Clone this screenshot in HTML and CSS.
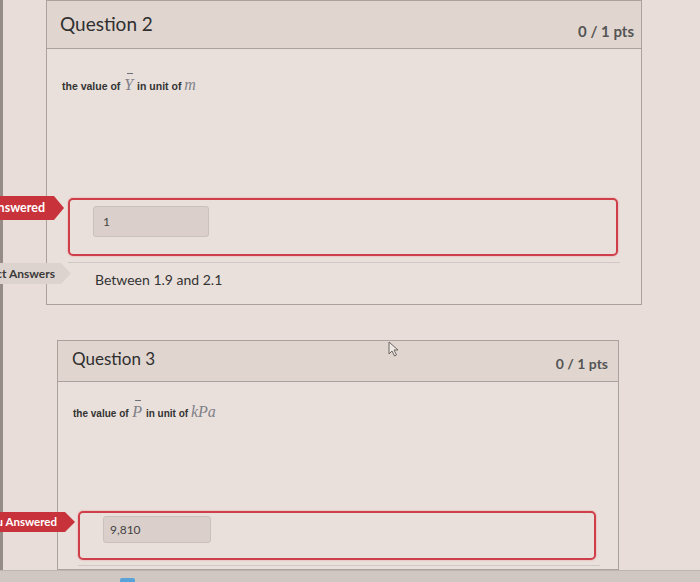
FILE: index.html
```html
<!DOCTYPE html>
<html lang="en">
<head>
<meta charset="utf-8">
<title>Quiz results</title>
<link rel="stylesheet" href="styles.css">
</head>
<body>
<div class="screen">
  <section class="card q2">
    <header class="card-head">
      <h2 class="title">Question 2</h2>
      <span class="pts">0 / 1 pts</span>
    </header>
    <div class="card-body">
      <p class="qtext">the value of <span class="math bar">Y</span> in unit of <span class="math">m</span></p>
      <div class="answer-row">
        <span class="tag tag-red">You Answered</span>
        <div class="answer-box"><div class="input">1</div></div>
      </div>
      <div class="correct-row">
        <span class="tag tag-gray">Correct Answers</span>
        <span class="correct">Between 1.9 and 2.1</span>
      </div>
    </div>
  </section>

  <section class="card q3">
    <header class="card-head">
      <h2 class="title">Question 3</h2>
      <span class="pts">0 / 1 pts</span>
    </header>
    <div class="card-body">
      <p class="qtext">the value of <span class="math bar">P</span> in unit of <span class="math">kPa</span></p>
      <div class="answer-row">
        <span class="tag tag-red">You Answered</span>
        <div class="answer-box"><div class="input">9,810</div></div>
      </div>
    </div>
  </section>

  <div class="taskbar"><span class="dock-icon"></span></div>

  <svg class="cursor" width="11" height="16" viewBox="0 0 11 16" aria-hidden="true">
    <path d="M1 1 L1 13 L4 10 L6.5 15 L8.5 14 L6 9 L10 9 Z" fill="#eee8e5" stroke="#6d6663" stroke-width="1"/>
  </svg>
</div>
</body>
</html>
```
FILE: styles.css
```css
html, body {
  margin: 0;
  padding: 0;
}
body {
  width: 700px;
  height: 582px;
  overflow: hidden;
  background: #e8ddd8;
  box-shadow: inset 3px 0 0 #958c88;
  font-family: Lato, "Liberation Sans", sans-serif;
  color: #333;
}
.screen {
  position: relative;
  display: flex;
  flex-direction: column;
  height: 582px;
}
.card {
  border: 1px solid #aba29e;
  background: #eae0db;
  box-sizing: border-box;
}
.q2 {
  margin-left: 46px;
  width: 596px;
}
.q3 {
  margin-left: 57px;
  width: 562px;
  margin-top: 35px;
  padding-bottom: 3px;
}
.card-head {
  display: flex;
  justify-content: space-between;
  align-items: flex-start;
  background: #e0d5cf;
  border-bottom: 1px solid #aba29e;
  box-sizing: border-box;
}
.q2 .card-head {
  height: 48px;
  padding: 12px 7px 0 13px;
}
.q3 .card-head {
  height: 41px;
  padding: 8px 10px 0 14px;
}
.title {
  margin: 0;
  font-weight: 400;
  color: #2f2f2f;
}
.q2 .title {
  font-size: 19px;
  line-height: 22px;
}
.q3 .title {
  font-size: 17px;
  line-height: 20px;
}
.pts {
  font-weight: 700;
  color: #555;
}
.q2 .pts {
  font-size: 15px;
  line-height: 18px;
  margin-top: 9px;
}
.q3 .pts {
  font-size: 14px;
  line-height: 17px;
  margin-top: 6px;
}
.card-body {
  display: flex;
  flex-direction: column;
}
.q2 .card-body {
  padding: 26px 0 13px 0;
}
.q3 .card-body {
  padding: 20px 0 0 0;
}
.qtext {
  margin: 0;
  height: 20px;
  line-height: 20px;
  font-family: "Liberation Sans", Arial, sans-serif;
  font-weight: 700;
  font-size: 10.5px;
  color: #333;
  white-space: nowrap;
}
.q2 .qtext { padding-left: 15px; }
.q3 .qtext { padding-left: 15px; font-size: 10px; }
.math {
  font-family: "Liberation Serif", serif;
  font-style: italic;
  font-weight: 400;
  font-size: 16px;
  color: #80808a;
}
.bar {
  position: relative;
  display: inline-block;
  margin: 0 1px;
}
.bar::before {
  content: "";
  position: absolute;
  left: 3px;
  top: -2px;
  width: 6px;
  height: 1px;
  background: #6f6f78;
}
.answer-row {
  position: relative;
  border-bottom: 1px solid #d2c8c3;
  box-sizing: border-box;
}
.q2 .answer-row {
  margin: 103px 0 0 21px;
  width: 552px;
  padding-bottom: 6px;
}
.q3 .answer-row {
  margin: 89px 0 0 20px;
  width: 522px;
  padding-bottom: 5px;
}
.answer-box {
  border: 2px solid #cf3f4a;
  border-radius: 5px;
  box-shadow: 0 0 2px rgba(230, 90, 95, 0.6);
  box-sizing: border-box;
}
.q2 .answer-box {
  width: 550px;
  height: 58px;
  padding: 6px 0 0 23px;
}
.q3 .answer-box {
  width: 518px;
  height: 49px;
  padding: 3px 0 0 23px;
}
.input {
  background: #dacfca;
  border: 1px solid #cbc1bc;
  border-radius: 3px;
  box-sizing: border-box;
  font-size: 12px;
  color: #444;
}
.q2 .input {
  width: 116px;
  height: 31px;
  line-height: 29px;
  padding-left: 9px;
}
.q3 .input {
  width: 108px;
  height: 27px;
  line-height: 25px;
  padding-left: 6px;
}
.tag {
  position: absolute;
  box-sizing: border-box;
  text-align: right;
  white-space: nowrap;
  font-weight: 700;
  font-size: 12.5px;
  clip-path: polygon(0 0, calc(100% - 10px) 0, 100% 50%, calc(100% - 10px) 100%, 0 100%);
}
.tag-red {
  background: #c8323b;
  color: #fff;
  padding-right: 19px;
}
.q2 .tag-red {
  width: 112px;
  left: -116px;
  top: -2px;
  height: 24px;
  line-height: 24px;
}
.q3 .tag-red {
  width: 118px;
  left: -121px;
  top: 1px;
  height: 20px;
  line-height: 20px;
  padding-right: 18px;
  font-size: 11.5px;
}
.correct-row {
  position: relative;
  margin-left: 21px;
  height: 28px;
  padding-left: 27px;
  display: flex;
  align-items: flex-end;
}
.tag-gray {
  width: 126px;
  left: -123px;
  top: 0;
  height: 21px;
  line-height: 21px;
  background: #ddd3ce;
  color: #3a3a3a;
  padding-right: 16px;
  font-size: 12px;
}
.correct {
  font-size: 14px;
  line-height: 20px;
  color: #333;
  padding-bottom: 1px;
}
.taskbar {
  flex: 1;
  margin-top: 0;
  background: #d1c7c2;
  border-top: 1px solid #bfb5b0;
  position: relative;
}
.dock-icon {
  position: absolute;
  left: 120px;
  bottom: 0;
  width: 15px;
  height: 4px;
  background: #5aa3d8;
  border-radius: 2px 2px 0 0;
}
.cursor {
  position: absolute;
  left: 388px;
  top: 341px;
}
```
